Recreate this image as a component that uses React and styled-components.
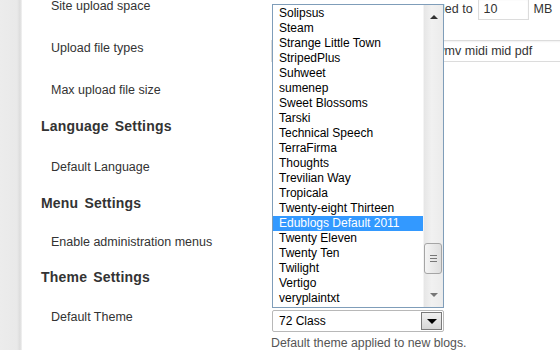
import React from 'react'
import styled, { createGlobalStyle } from 'styled-components'

const themes = [
  'Solipsus', 'Steam', 'Strange Little Town', 'StripedPlus', 'Suhweet',
  'sumenep', 'Sweet Blossoms', 'Tarski', 'Technical Speech', 'TerraFirma',
  'Thoughts', 'Trevilian Way', 'Tropicala', 'Twenty-eight Thirteen',
  'Edublogs Default 2011', 'Twenty Eleven', 'Twenty Ten', 'Twilight',
  'Vertigo', 'veryplaintxt'
]

const GlobalStyle = createGlobalStyle`
  html, body {
    margin: 0;
    background: #fff;
    overflow: hidden;
  }
  body {
    font-family: "Liberation Sans", Arial, sans-serif;
  }
`

const App = () => {
  return (
    <>
      <GlobalStyle />
      <Page className='page'>
        <Sidebar />
        <Main>
          <Form>
            <Row $h={42}>
              <Label>Site upload space</Label>
              <Cell>
                <QuotaText>Limit total size of files uploaded to</QuotaText>
                <SmallInput readOnly value='10' />
                <Unit>MB</Unit>
              </Cell>
            </Row>
            <Row $h={42}>
              <Label>Upload file types</Label>
              <Cell>
                <WideInput readOnly value='jpg jpeg png gif mov avi mpg wmv midi mid pdf' />
              </Cell>
            </Row>
            <Row $h={42}>
              <Label>Max upload file size</Label>
              <Cell />
            </Row>

            <Heading $h={35}>Language Settings</Heading>
            <Row $h={42}>
              <Label>Default Language</Label>
              <Cell />
            </Row>

            <Heading $h={34}>Menu Settings</Heading>
            <Row $h={40}>
              <Label>Enable administration menus</Label>
              <Cell />
            </Row>

            <Heading $h={34}>Theme Settings</Heading>
            <TopRow>
              <TopLabel>Default Theme</TopLabel>
              <TopCell>
                <ThemeField>
                  <ListBox>
                    <Options>
                      {themes.map(t => (
                        <Option key={t} $selected={t === 'Edublogs Default 2011'}>{t}</Option>
                      ))}
                    </Options>
                    <Scrollbar>
                      <ScrollButton>
                        <Arrow $up $color='#333' />
                      </ScrollButton>
                      <Track>
                        <Thumb $offset={214}>
                          <Grip />
                          <Grip />
                          <Grip />
                        </Thumb>
                      </Track>
                      <ScrollButton>
                        <Arrow $color='#777' />
                      </ScrollButton>
                    </Scrollbar>
                  </ListBox>
                  <SelectBox>
                    <span>72 Class</span>
                    <SelectButton>
                      <Arrow $color='#000' $big />
                    </SelectButton>
                  </SelectBox>
                </ThemeField>
                <Description>Default theme applied to new blogs.</Description>
              </TopCell>
            </TopRow>
          </Form>
        </Main>
      </Page>
    </>
  )
}

export default App

const Page = styled.div`
  display: flex;
  height: 360px;
  overflow: hidden;
`

const Sidebar = styled.div`
  width: 22px;
  height: 350px;
  flex-shrink: 0;
  background: linear-gradient(to right, #ececec 0, #e9e9e9 17px, #dcdcdc 20px, #f3f3f3 22px);
`

const Main = styled.div`
  flex: 1;
  position: relative;
  overflow: hidden;
  background: #fff;
`

const Form = styled.div`
  display: flex;
  flex-direction: column;
  margin-top: -15px;
`

const Row = styled.div`
  display: grid;
  grid-template-columns: 249px 1fr;
  align-items: center;
  height: ${p => p.$h}px;
`

const Label = styled.div`
  padding-left: 29px;
  font-size: 12.5px;
  line-height: 16px;
  color: #333;
`

const Cell = styled.div`
  display: flex;
  align-items: center;
  gap: 5px;
  padding-top: 6px;
  font-size: 12.5px;
  color: #333;
  white-space: nowrap;
`

const QuotaText = styled.span`
  margin-left: 14px;
`

const Unit = styled.span`
  margin-left: 0;
`

const SmallInput = styled.input`
  box-sizing: border-box;
  width: 51px;
  height: 22px;
  margin: 0;
  padding: 0 5px;
  border: 1px solid #dcdcdc;
  box-shadow: inset 0 1px 2px rgba(0, 0, 0, 0.06);
  font-family: "Liberation Sans", Arial, sans-serif;
  font-size: 12.5px;
  color: #333;
  outline: none;
`

const WideInput = styled(SmallInput)`
  width: 420px;
  padding: 0 1px;
`

const Heading = styled.div`
  box-sizing: border-box;
  height: ${p => p.$h}px;
  padding: 6px 0 0 19px;
  font-size: 14px;
  line-height: 18px;
  font-weight: bold;
  letter-spacing: 0.2px;
  word-spacing: 2px;
  color: #333;
`

const TopRow = styled.div`
  display: grid;
  grid-template-columns: 249px 1fr;
  align-items: start;
`

const TopLabel = styled(Label)`
  padding-top: 13px;
`

const TopCell = styled.div`
  padding-top: 14px;
`

const ThemeField = styled.div`
  position: relative;
  width: 172px;
  margin-left: 1px;
`

const ListBox = styled.div`
  position: absolute;
  left: 0;
  bottom: calc(100% + 2px);
  box-sizing: border-box;
  width: 172px;
  height: 304px;
  display: flex;
  border: 1px solid #7f9db9;
  background: #fff;
  overflow: hidden;
  z-index: 5;
`

const Options = styled.div`
  flex: 1;
  min-width: 0;
  display: flex;
  flex-direction: column;
  padding-top: 1px;
`

const Option = styled.div`
  height: 15px;
  line-height: 15px;
  padding-left: 6px;
  font-size: 12px;
  white-space: nowrap;
  color: ${p => (p.$selected ? '#fff' : '#000')};
  background: ${p => (p.$selected ? '#3399ff' : 'transparent')};
`

const Scrollbar = styled.div`
  width: 19px;
  flex-shrink: 0;
  display: flex;
  flex-direction: column;
  background: linear-gradient(to right, #e6e6e6, #f1f1f1 40%, #ebebeb);
  border-left: 1px solid #f4f4f4;
`

const ScrollButton = styled.div`
  height: 24px;
  display: flex;
  align-items: center;
  justify-content: center;
`

const Track = styled.div`
  flex: 1;
`

const Thumb = styled.div`
  box-sizing: border-box;
  margin: ${p => p.$offset}px 1px 0 0;
  height: 31px;
  border: 1px solid #a5a5a5;
  border-radius: 3px;
  background: linear-gradient(to right, #f4f4f4, #dedede);
  display: flex;
  flex-direction: column;
  align-items: center;
  justify-content: center;
  gap: 2px;
`

const Grip = styled.div`
  width: 7px;
  height: 1px;
  background: #777;
`

const Arrow = styled.div`
  width: 0;
  height: 0;
  border-left: ${p => (p.$big ? 5 : 4)}px solid transparent;
  border-right: ${p => (p.$big ? 5 : 4)}px solid transparent;
  ${p => (p.$up ? 'border-bottom' : 'border-top')}: ${p => (p.$big ? 5 : 4)}px solid ${p => p.$color};
`

const SelectBox = styled.div`
  box-sizing: border-box;
  height: 22px;
  display: flex;
  align-items: center;
  justify-content: space-between;
  padding: 0 1px 0 6px;
  border: 1px solid #b8b8b8;
  border-radius: 2px;
  font-size: 12px;
  color: #000;
`

const SelectButton = styled.div`
  box-sizing: border-box;
  width: 21px;
  height: 18px;
  display: flex;
  align-items: center;
  justify-content: center;
  border: 1px solid #7a7a7a;
  background: linear-gradient(#f0f0f0, #d6d6d6);
`

const Description = styled.div`
  margin-top: 4px;
  font-size: 12.3px;
  line-height: 14px;
  color: #555;
  white-space: nowrap;
`
